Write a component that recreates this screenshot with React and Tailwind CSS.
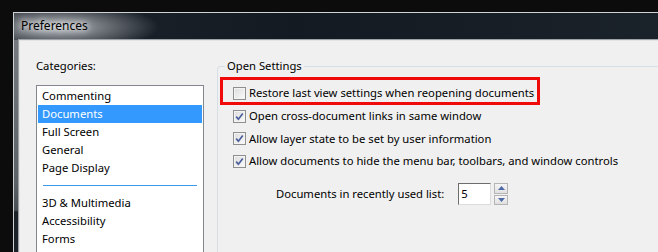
import React from "react";

const FONT = { fontFamily: '"Segoe UI", "Noto Sans", "Open Sans", sans-serif' };

function Check({ checked }) {
  return (
    <span className="flex h-[13px] w-[13px] shrink-0 items-center justify-center border border-[#8e8f8f] bg-gradient-to-br from-[#dcdcdc] to-[#fbfbfb]">
      <span className="flex h-[11px] w-[11px] items-center justify-center border border-[#f4f4f4]">
        {checked && (
          <svg width="9" height="9" viewBox="0 0 9 9">
            <path d="M1.2 4.6 L3.4 7.2 L7.8 1.4" fill="none" stroke="#4a5f9c" strokeWidth="1.7" />
          </svg>
        )}
      </span>
    </span>
  );
}

function Row({ checked, children, className = "" }) {
  return (
    <label className={"flex items-center gap-[3px] whitespace-nowrap " + className}>
      <Check checked={checked} />
      <span>{children}</span>
    </label>
  );
}

const categories = ["Commenting", "Documents", "Full Screen", "General", "Page Display"];
const more = ["3D & Multimedia", "Accessibility", "Forms"];

export default function App() {
  return (
    <div
      className="h-[252px] w-[658px] overflow-hidden bg-[#0c0c0c] pl-[13px] pt-[12px] text-[11.25px] leading-[16px] text-black"
      style={FONT}
    >
      {/* window frame */}
      <div className="w-[700px] border-l border-t border-[#cfd3d6] bg-[linear-gradient(to_bottom,#23292f_0px,#23292f_26px,#767a7e_27px,#5d6266_170px,#4a4f53_197px,#1b2126_199px)]">
        <div className="flex h-[26px] items-center bg-[radial-gradient(ellipse_100px_24px_at_45px_14px,#b4b8bc_0%,#5e646a_55%,transparent_100%),linear-gradient(to_right,#1d242b,#131a21_40%,#1b232b)] pl-[7px]">
          <span className="text-[12px] text-black [text-shadow:0_0_6px_#fff,0_0_10px_#fff]">Preferences</span>
        </div>
        <div className="ml-[4px] border-l border-t border-[#9ea3a7] bg-[#f0f0f0]">
          <div className="flex border-l border-t border-[#e4e4e4] pl-[16px] pt-[17px]">
            {/* categories */}
            <div className="w-[168px] shrink-0">
              <div>Categories:</div>
              <div className="mt-[11px] h-[200px] border border-[#828790] bg-white px-[1px] pt-[1px]">
                <ul className="flex flex-col">
                  {categories.map((c) => (
                    <li
                      key={c}
                      className={
                        "h-[18px] pl-[4px] leading-[18px] " +
                        (c === "Documents" ? "bg-[#3399ff] text-white" : "")
                      }
                    >
                      {c}
                    </li>
                  ))}
                </ul>
                <div className="mx-[5px] my-[8px] h-px bg-[#3d9be9]" />
                <ul className="flex flex-col">
                  {more.map((c) => (
                    <li key={c} className="h-[18px] pl-[4px] leading-[18px]">
                      {c}
                    </li>
                  ))}
                </ul>
              </div>
            </div>

            {/* open settings */}
            <fieldset className="ml-[13px] h-[220px] w-[480px] shrink-0 rounded-[3px] border border-[#d5dfe5]">
              <legend className="ml-[7px] px-[2px]">Open Settings</legend>
              <div className="ml-[2px] mt-[3px] flex h-[28px] w-[320px] items-center border-[3px] border-[#f00a0a] pl-[10px] pt-[4px]">
                <Row checked={false}>Restore last view settings when reopening documents</Row>
              </div>
              <div className="flex flex-col pl-[15px]">
                <Row checked className="h-[22px]">Open cross-document links in same window</Row>
                <Row checked className="h-[23px]">Allow layer state to be set by user information</Row>
                <Row checked className="h-[22px]">Allow documents to hide the menu bar, toolbars, and window controls</Row>
                <div className="mt-[11px] flex h-[22px] items-center pl-[43px]">
                  <span>Documents in recently used list:</span>
                  <div className="ml-[14px] flex h-[22px] w-[33px] items-center border border-t-[#6d6d6d] border-l-[#6d6d6d] border-r-[#dcdcdc] border-b-[#dcdcdc] bg-white pl-[2px]">
                    5
                  </div>
                  <div className="ml-[3px] flex h-[22px] w-[14px] flex-col gap-px">
                    <span className="flex flex-1 items-center justify-center border border-[#b5b5b5] bg-gradient-to-b from-[#f6f6f6] to-[#e0e0e0]">
                      <svg width="7" height="4" viewBox="0 0 7 4">
                        <path d="M0 4 L3.5 0 L7 4 Z" fill="#4c6ba7" />
                      </svg>
                    </span>
                    <span className="flex flex-1 items-center justify-center border border-[#b5b5b5] bg-gradient-to-b from-[#f6f6f6] to-[#e0e0e0]">
                      <svg width="7" height="4" viewBox="0 0 7 4">
                        <path d="M0 0 L7 0 L3.5 4 Z" fill="#4c6ba7" />
                      </svg>
                    </span>
                  </div>
                </div>
              </div>
            </fieldset>
          </div>
        </div>
      </div>
    </div>
  );
}
